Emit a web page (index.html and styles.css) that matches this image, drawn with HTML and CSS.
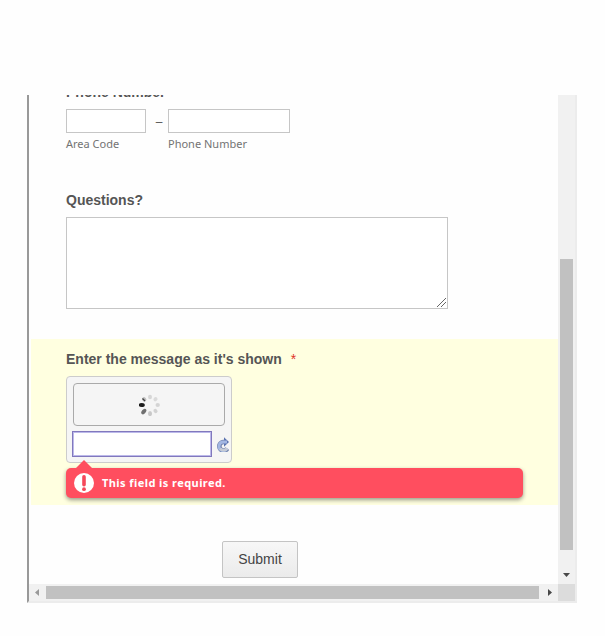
FILE: index.html
```html
<!DOCTYPE html>
<html lang="en">
<head>
    <meta charset="UTF-8">
    <meta name="viewport" content="width=device-width, initial-scale=1.0">
    <title>Form</title>
    <link rel="stylesheet" href="styles.css">
</head>
<body>
    <div class="frame">
        <form class="form-view">
            <div class="line phone-line">
                <label class="label">Phone Number</label>
                <div class="phone">
                    <div class="sub area">
                        <input type="text" class="text-input">
                        <label class="sub-label">Area Code</label>
                    </div>
                    <span class="dash">–</span>
                    <div class="sub number">
                        <input type="text" class="text-input">
                        <label class="sub-label">Phone Number</label>
                    </div>
                </div>
            </div>

            <div class="line questions-line">
                <label class="label">Questions?</label>
                <div class="textarea">
                    <svg class="grip" width="9" height="9" viewBox="0 0 9 9" shape-rendering="crispEdges">
                        <path d="M0 9L9 0M4 9L9 4" stroke="#666" fill="none"/>
                    </svg>
                </div>
            </div>

            <div class="line error-line">
                <label class="label">Enter the message as it's shown<span class="required">*</span></label>
                <div class="captcha">
                    <div class="captcha-image">
                        <svg width="22" height="22" viewBox="0 0 22 22">
                            <ellipse cx="11" cy="3" rx="2" ry="2.3" fill="#d6d6d6"/>
                            <ellipse cx="16.5" cy="5.2" rx="1.9" ry="2.2" fill="#dadada" transform="rotate(45 16.5 5.2)"/>
                            <ellipse cx="18.7" cy="11" rx="2.2" ry="1.9" fill="#d4d4d4"/>
                            <ellipse cx="16.5" cy="17" rx="1.9" ry="2.2" fill="#d2d2d2" transform="rotate(-45 16.5 17)"/>
                            <ellipse cx="11" cy="19.5" rx="2" ry="2.6" fill="#c8c8c8"/>
                            <ellipse cx="4.8" cy="17.6" rx="2" ry="3.2" fill="#707070" transform="rotate(38 4.8 17.6)"/>
                            <ellipse cx="2.8" cy="11" rx="3" ry="2.1" fill="#1c1c1c"/>
                            <ellipse cx="5.2" cy="5.4" rx="2" ry="2.3" fill="#bdbdbd" transform="rotate(-45 5.2 5.4)"/>
                            <path d="M3.5 4.5L6 7" stroke="#444" stroke-width="1.2"/>
                        </svg>
                    </div>
                    <div class="captcha-row">
                        <input type="text" class="captcha-input">
                        <svg class="reload" width="12" height="15" viewBox="0 0 12 15">
                            <path d="M10.3 11.6A4.3 4.3 0 1 1 6.5 5H8" fill="none" stroke="#7485ad" stroke-width="4.6"/>
                            <path d="M7 .3L12 5L7 9.7Z" fill="#5b73b0"/>
                            <path d="M10.1 11.4A4.3 4.3 0 1 1 6.5 5H10" fill="none" stroke="#a3b7e2" stroke-width="2.8"/>
                            <path d="M10.1 11.4A4.3 4.3 0 0 1 3.2 11.5" fill="none" stroke="#c5cad4" stroke-width="2.8"/>
                        </svg>
                    </div>
                </div>
                <div class="error-message">
                    <svg class="error-arrow" width="16" height="8" viewBox="0 0 16 8"><path d="M0 8L8 0L16 8Z" fill="#ff4e5f"/></svg>
                    <svg width="20" height="20" viewBox="0 0 20 20">
                        <circle cx="10" cy="10" r="10" fill="#fff"/>
                        <rect x="8.2" y="2" width="3.6" height="11.5" rx="1.8" fill="#f5485a"/>
                        <circle cx="10" cy="16.2" r="1.9" fill="#f5485a"/>
                    </svg>
                    <span class="error-text">This field is required.</span>
                </div>
            </div>

            <div class="buttons">
                <button type="button" class="submit">Submit</button>
            </div>
        </form>

        <div class="scroll-v">
            <div class="thumb"></div>
            <svg class="arrow" width="7" height="4" viewBox="0 0 7 4"><path d="M0 0H7L3.5 4Z" fill="#484848"/></svg>
        </div>
        <div class="scroll-h">
            <svg class="arrow" width="4" height="7" viewBox="0 0 4 7"><path d="M4 0V7L0 3.5Z" fill="#999"/></svg>
            <div class="thumb"></div>
            <svg class="arrow" width="4" height="7" viewBox="0 0 4 7"><path d="M0 0V7L4 3.5Z" fill="#484848"/></svg>
        </div>
        <div class="corner"></div>
    </div>
</body>
</html>
```

FILE: styles.css
```css
*{
    margin: 0;
    padding: 0;
    box-sizing: border-box;
}
body{
    background-color: #fefefe;
    font-family: "Liberation Sans", Arial, sans-serif;
    color: #555;
}
svg{
    display: block;
    flex-shrink: 0;
}
.frame{
    width: 550px;
    height: 508px;
    margin: 95px 0 0 27px;
    border-left: 2px solid #999;
    border-right: 2px solid #ececec;
    border-bottom: 2px solid #ececec;
    display: grid;
    grid-template-columns: 529px 17px;
    grid-template-rows: 489px 17px;
}
.form-view{
    overflow: hidden;
    background-color: #fefefe;
    display: flex;
    flex-direction: column;
}
.line{
    padding-left: 37px;
    flex-shrink: 0;
}
.label{
    display: block;
    font-size: 14px;
    font-weight: bold;
    line-height: 16px;
    margin-bottom: 9px;
}
/* scrolled part way out of the view */
.phone-line{
    margin-top: -11px;
    height: 108px;
}
.phone{
    display: flex;
}
.sub{
    display: flex;
    flex-direction: column;
}
.area{
    width: 80px;
}
.number{
    width: 122px;
}
.dash{
    width: 22px;
    padding-left: 4px;
    text-align: center;
    font-size: 12px;
    line-height: 26px;
}
.text-input{
    width: 100%;
    height: 24px;
    border: 1px solid #c6c6c6;
    background-color: #fff;
    outline: none;
}
.sub-label{
    font-family: "Noto Sans", sans-serif;
    font-size: 11px;
    line-height: 14px;
    margin-top: 4px;
    color: #737373;
    white-space: nowrap;
}
.questions-line{
    height: 147px;
}
.textarea{
    width: 382px;
    height: 92px;
    border: 1px solid #c6c6c6;
    background-color: #fff;
    display: flex;
    align-items: flex-end;
    justify-content: flex-end;
    padding: 1px;
}
.error-line{
    height: 166px;
    margin-left: 2px;
    padding: 12px 35px 0 35px;
    background-color: #ffffe0;
}
.required{
    color: #e0322a;
    font-weight: normal;
    margin-left: 9px;
}
.captcha{
    width: 166px;
    height: 87px;
    border: 1px solid #ccc;
    border-radius: 4px;
    background-color: #f5f5f5;
    padding: 6px;
}
.captcha-image{
    height: 43px;
    border: 1px solid #aaa;
    border-radius: 4px;
    padding-left: 2px;
    display: flex;
    align-items: center;
    justify-content: center;
}
.captcha-row{
    display: flex;
    margin: 5px 0 0 -1px;
    align-items: center;
}
.captcha-input{
    width: 140px;
    height: 26px;
    border: 1px solid #8178bd;
    outline: 1px solid #bcb9ea;
    outline-offset: -2px;
    background-color: #fff;
}
.reload{
    margin-left: 5px;
}
.error-message{
    position: relative;
    height: 30px;
    margin-top: 5px;
    padding-left: 8px;
    display: flex;
    align-items: center;
    gap: 8px;
    background-color: #ff4e5f;
    border-radius: 5px;
    box-shadow: 0 2px 4px rgba(0, 0, 0, 0.4);
    color: #fff;
    font: bold 11px "Noto Sans", sans-serif;
    letter-spacing: 0.43px;
}
.error-text{
    padding-bottom: 2px;
}
.error-arrow{
    position: absolute;
    left: 10px;
    top: -8px;
}
.buttons{
    padding: 36px 0 0 193px;
}
.submit{
    width: 76px;
    height: 37px;
    padding-bottom: 2px;
    border: 1px solid #c4c4c4;
    border-radius: 2px;
    background: linear-gradient(#f7f7f7, #ebebeb);
    font-family: inherit;
    font-size: 14px;
    color: #444;
}
.scroll-v,
.scroll-h{
    background-color: #f1f1f1;
    display: flex;
    align-items: center;
}
.scroll-v{
    flex-direction: column;
    padding-top: 164px;
}
.thumb{
    background-color: #c1c1c1;
}
.scroll-v .thumb{
    width: 13px;
    height: 291px;
}
.scroll-v .arrow{
    margin-top: 23px;
}
.scroll-h{
    padding-left: 6px;
}
.scroll-h .thumb{
    width: 493px;
    height: 13px;
    margin: 0 9px 0 7px;
}
.corner{
    background-color: #dcdcdc;
}
```
